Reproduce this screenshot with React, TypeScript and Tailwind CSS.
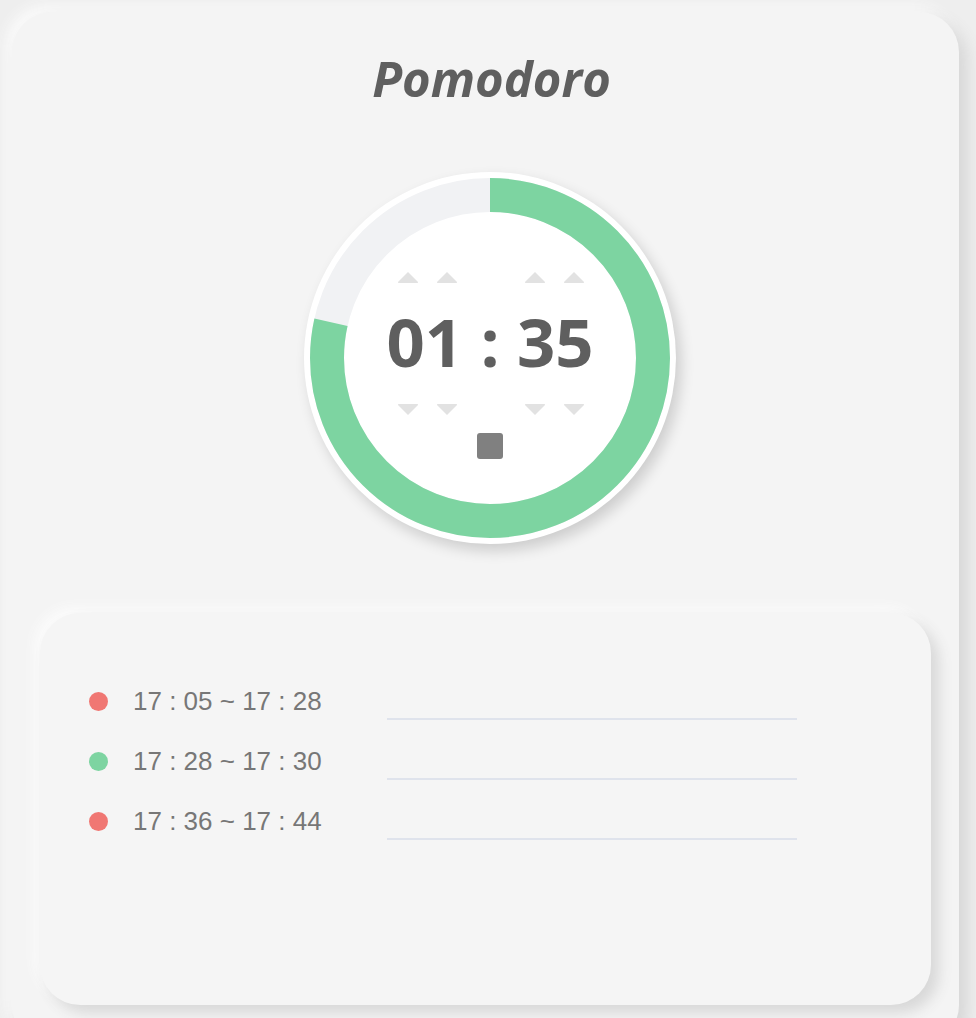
import React from "react";

const Up = () => (
  <svg width="22" height="11" viewBox="0 0 22 11">
    <path d="M11 0 L21 10 Q21.5 11 20 11 L2 11 Q0.5 11 1 10 Z" fill="#e2e2e2" />
  </svg>
);
const Down = () => (
  <svg width="22" height="11" viewBox="0 0 22 11">
    <path d="M11 11 L21 1 Q21.5 0 20 0 L2 0 Q0.5 0 1 1 Z" fill="#e2e2e2" />
  </svg>
);

const rows = [
  { color: "bg-[#f07773]", text: "17 : 05 ~ 17 : 28" },
  { color: "bg-[#7dd4a1]", text: "17 : 28 ~ 17 : 30" },
  { color: "bg-[#f07773]", text: "17 : 36 ~ 17 : 44" },
];

export default function App() {
  const r = 163;
  const c = 2 * Math.PI * r;
  const progress = 0.785;
  return (
    <div className="min-h-[1018px] bg-[#eeeeee] p-3 overflow-hidden">
      <div className="w-[947px] rounded-[40px] bg-[#f4f4f4] shadow-[8px_8px_16px_#d6d6d6,-6px_-6px_14px_#fbfbfb] px-[28px] pt-[42px] pb-[40px]">
        <h1
          className="text-center text-[49px] font-bold italic leading-none text-[#5f5f5f] pl-[12px]"
          style={{ fontFamily: '"Open Sans", sans-serif' }}
        >
          Pomodoro
        </h1>
        <div className="mt-[69px] flex justify-center pl-[9px]">
          <div className="relative h-[372px] w-[372px] rounded-full bg-white shadow-[5px_7px_14px_rgba(0,0,0,0.16)]">
            <svg className="absolute left-0 top-0" width="372" height="372" viewBox="0 0 372 372">
              <circle cx="186" cy="186" r={r} fill="none" stroke="#f1f2f4" strokeWidth="34" />
              <circle
                cx="186"
                cy="186"
                r={r}
                fill="none"
                stroke="#7dd4a1"
                strokeWidth="34"
                strokeDasharray={`${c * progress} ${c}`}
                transform="rotate(-90 186 186)"
              />
            </svg>
            <div className="absolute left-[41px] top-[41px] flex h-[290px] w-[290px] flex-col items-center rounded-full bg-white pt-[59px]">
              <div className="flex h-[11px] items-center gap-[66px] pl-[1px]">
                <div className="flex gap-[17px]"><Up /><Up /></div>
                <div className="flex gap-[17px]"><Up /><Up /></div>
              </div>
              <div
                className="mt-[25px] text-[67px] font-bold leading-none text-[#5f5f5f]"
                style={{ fontFamily: '"Open Sans", sans-serif' }}
              >
                01 : 35
              </div>
              <div className="mt-[29px] flex h-[11px] items-center gap-[66px] pl-[1px]">
                <div className="flex gap-[17px]"><Down /><Down /></div>
                <div className="flex gap-[17px]"><Down /><Down /></div>
              </div>
              <div className="mt-[18px] h-[26px] w-[26px] rounded-[3px] bg-[#808080]" />
            </div>
          </div>
        </div>
        <div className="mt-[69px] h-[392px] rounded-[40px] bg-[#f5f5f5] shadow-[8px_8px_14px_#d8d8d8,-6px_-6px_12px_#fbfbfb] pl-[49px] pt-[58px]">
          {rows.map((row, i) => (
            <div key={i} className="flex h-[60px] items-center">
              <div className={`h-[19px] w-[19px] rounded-full ${row.color}`} />
              <div
                className="ml-[25px] w-[254px] text-[26px] text-[#777777]"
                style={{ fontFamily: '"Liberation Sans", Arial, sans-serif' }}
              >
                {row.text}
              </div>
              <div className="h-[49px] w-[410px] border-b-2 border-[#dfe3ec] self-start" />
            </div>
          ))}
        </div>
      </div>
    </div>
  );
}
